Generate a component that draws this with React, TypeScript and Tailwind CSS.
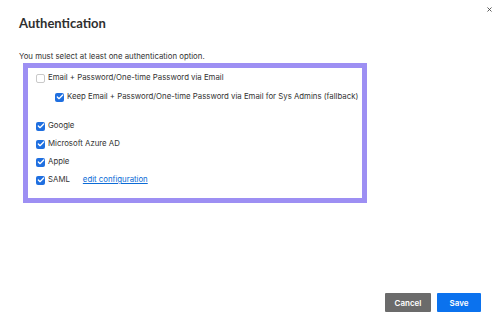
import { Check, X } from "lucide-react";

type Option = { label: string; checked: boolean; indent?: boolean; link?: string };

const OPTIONS: Option[] = [
  { label: "Email + Password/One-time Password via Email", checked: false },
  {
    label: "Keep Email + Password/One-time Password via Email for Sys Admins (fallback)",
    checked: true,
    indent: true,
  },
  { label: "Google", checked: true },
  { label: "Microsoft Azure AD", checked: true },
  { label: "Apple", checked: true },
  { label: "SAML", checked: true, link: "edit configuration" },
];

function Box({ checked }: { checked: boolean }) {
  if (!checked) {
    return <span className="w-[9px] h-[9px] shrink-0 rounded-[2px] border border-[#c9c9c9] bg-white" />;
  }
  return (
    <span className="w-[9px] h-[9px] shrink-0 rounded-[2px] bg-[#1f6fe0] flex items-center justify-center">
      <Check className="w-[8px] h-[8px] text-white" strokeWidth={4} />
    </span>
  );
}

export default function App() {
  return (
    <div className="w-[500px] h-[331px] bg-white flex flex-col font-['Inter',sans-serif] text-[#333]">
      {/* Header */}
      <div className="flex justify-between pl-[19px] pr-[7px] pt-[4px]">
        <h1 className="pt-[12px] text-[13px] leading-[14px] font-bold text-[#2f2f2f] font-['Lato',sans-serif]">
          Authentication
        </h1>
        <X className="w-[7px] h-[7px] mt-[2px] text-[#444]" strokeWidth={3} />
      </div>

      <p className="pl-[19px] mt-[21px] text-[7.8px] leading-[10px]">
        You must select at least one authentication option.
      </p>

      {/* Options */}
      <div className="ml-[23px] mt-[2px] w-[344px] h-[140px] border-[5px] border-[#9d8ff3] pl-[8px] pt-[1px]">
        {OPTIONS.map((opt, i) => (
          <div
            key={opt.label}
            className={
              "h-[18px] flex items-center gap-[3px] text-[7.8px] " +
              (opt.indent ? "pl-[19px] mt-[1px] " : "") +
              (i === 2 ? "mt-[11px]" : "")
            }
          >
            <Box checked={opt.checked} />
            <span>{opt.label}</span>
            {opt.link && (
              <a className="ml-[10px] text-[#0b6bd6] underline" href="#">
                {opt.link}
              </a>
            )}
          </div>
        ))}
      </div>

      {/* Footer */}
      <div className="mt-auto mb-[19px] pr-[19px] flex justify-end gap-[6px]">
        <button className="w-[46px] h-[19px] bg-[#6b6b6b] text-white text-[8px] font-semibold rounded-[1px]">
          Cancel
        </button>
        <button className="w-[44px] h-[19px] bg-[#0b72ee] text-white text-[8px] font-semibold rounded-[1px]">
          Save
        </button>
      </div>
    </div>
  );
}
